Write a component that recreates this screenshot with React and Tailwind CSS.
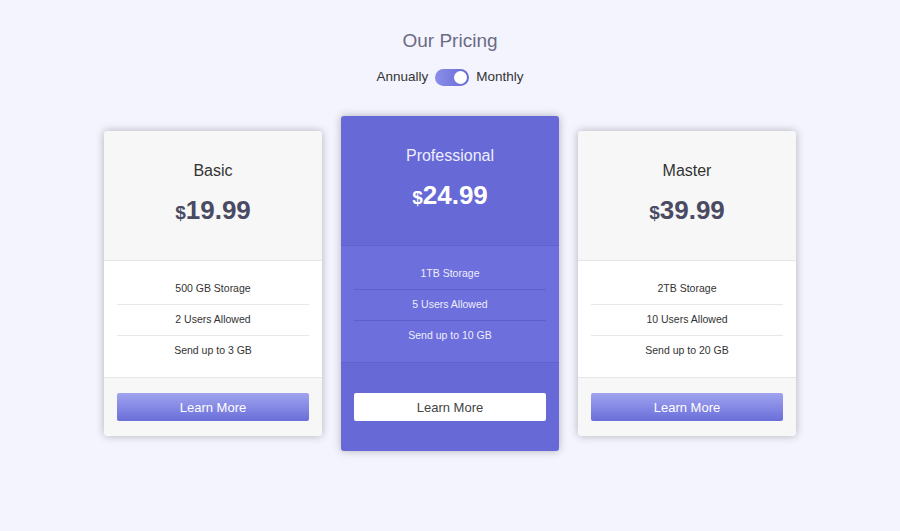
import React, { useState } from 'react';

const PLANS = [
  { name: 'Basic', price: '19.99', features: ['500 GB Storage', '2 Users Allowed', 'Send up to 3 GB'] },
  { name: 'Professional', price: '24.99', features: ['1TB Storage', '5 Users Allowed', 'Send up to 10 GB'], active: true },
  { name: 'Master', price: '39.99', features: ['2TB Storage', '10 Users Allowed', 'Send up to 20 GB'] },
];

const PlanCard = ({ plan }) => {
  const on = plan.active;
  return (
    <div
      className={`w-[218px] rounded-[3px] overflow-hidden shadow-[0_0_8px_rgba(0,0,0,0.28)] ${
        on ? 'bg-[#6669d6] text-white' : 'bg-[#f7f7f7] text-[#333]'
      }`}
    >
      {/* Header */}
      <div className="h-[129px] flex flex-col items-center pt-[30px]">
        <h2 className={`text-[16px] leading-[20px] ${on ? 'text-[#eef]' : 'text-[#333]'}`}>{plan.name}</h2>
        <div className={`mt-[13px] flex items-baseline font-bold ${on ? 'text-white' : 'text-[#4a4a63]'}`}>
          <span className="text-[19px]">$</span>
          <span className="text-[26px] leading-[32px]">{plan.price}</span>
        </div>
      </div>

      {/* Features */}
      <ul
        className={`px-[13px] pt-[12px] pb-[11px] border-y text-[10.5px] ${
          on ? 'bg-[#6c6fdc] border-[#5f62cc] text-[#eef]' : 'bg-white border-[#e6e6e6] text-[#333]'
        }`}
      >
        {plan.features.map((f, i) => (
          <li
            key={f}
            className={`h-[31px] flex items-center justify-center ${
              i > 0 ? (on ? 'border-t border-[#5d60c8]' : 'border-t border-[#e8e8e8]') : ''
            }`}
          >
            {f}
          </li>
        ))}
      </ul>

      {/* Footer */}
      <div className={on ? 'px-[13px] py-[30px]' : 'px-[13px] py-[15px]'}>
        <button
          className={`w-full h-[28px] rounded-[2px] text-[13px] ${
            on
              ? 'bg-white text-[#444]'
              : 'bg-[linear-gradient(180deg,#a0a4ef_0%,#6a6ed9_100%)] text-white'
          }`}
        >
          Learn More
        </button>
      </div>
    </div>
  );
};

export default function App() {
  const [monthly, setMonthly] = useState(true);
  return (
    <div className="min-h-[531px] w-full bg-[#f4f4fe] flex flex-col items-center font-['Liberation_Sans',Arial,sans-serif]">
      <h1 className="mt-[29px] text-[19px] leading-[23px] text-[#6b6b85]">Our Pricing</h1>

      <div className="mt-[15px] flex items-center gap-[7px] text-[13.5px] text-[#333]">
        <span>Annually</span>
        <button
          onClick={() => setMonthly(!monthly)}
          className="w-[34px] h-[17px] rounded-full bg-[linear-gradient(90deg,#8a8ee9,#676bd6)] flex items-center px-[2px]"
        >
          <span className={`w-[13px] h-[13px] rounded-full bg-white ${monthly ? 'ml-auto' : ''}`} />
        </button>
        <span>Monthly</span>
      </div>

      <div className="mt-[29px] flex items-center gap-[19px]">
        {PLANS.map((p) => (
          <PlanCard key={p.name} plan={p} />
        ))}
      </div>
    </div>
  );
}
